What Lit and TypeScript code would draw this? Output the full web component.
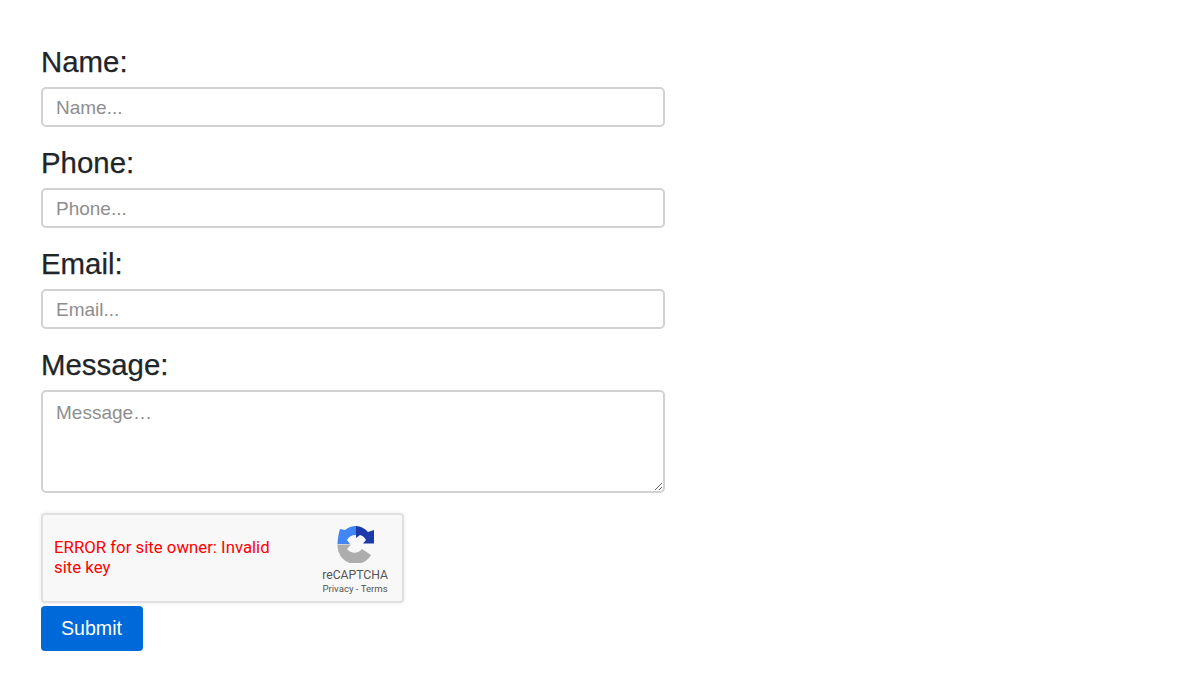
import { LitElement, html, css } from "lit";
import { customElement } from "lit/decorators.js";

@customElement("app-root")
export class AppRoot extends LitElement {
  static styles = css`
    :host { display: block; background: #fff; min-height: 692px; font-family: "Liberation Sans", Arial, sans-serif; color: #212529; }
    form { display: flex; flex-direction: column; width: 624px; padding: 45px 0 0 41px; box-sizing: content-box; }
    label { display: block; font-size: 29.4px; line-height: 34px; margin-bottom: 7.5px; -webkit-text-stroke: 0.25px #212529; }
    .field { display: block; width: 100%; box-sizing: border-box; height: 40.5px; margin: 0 0 19px; padding: 2px 13px 0; border: 2px solid #d2d2d2; border-radius: 5px; outline: none; background: #fff; font-family: inherit; font-size: 19px; color: #495057; }
    .field::placeholder { color: #8e8e8e; opacity: 1; }
    textarea.field { height: 103.5px; padding: 8.5px 13px; margin-bottom: 19.5px; line-height: 26px; resize: vertical; }
    .captcha { display: flex; align-items: center; justify-content: space-between; box-sizing: border-box; width: 363px; height: 90.5px; padding: 0 14px 0 11px; background: #f8f8f8; border: 2px solid #e0e0e0; border-radius: 4px; box-shadow: 0 0 3px 1px rgba(0,0,0,.06); margin-bottom: 3px; }
    .err { width: 225px; font-family: Roboto, sans-serif; font-size: 16.8px; line-height: 19.5px; color: #ff0000; }
    .brand { display: flex; flex-direction: column; align-items: center; padding-top: 6px; }
    .brand svg { display: block; margin-bottom: 5px; }
    .rc { font-family: Roboto, sans-serif; font-size: 12.2px; line-height: 14px; color: #555; }
    .links { font-family: Roboto, sans-serif; font-size: 9.6px; line-height: 14px; color: #555; white-space: nowrap; }
    button { align-self: flex-start; width: 102px; height: 45px; padding: 0 1px 0 0; border: 0; border-radius: 4px; background: #0069d9; color: #fff; font-family: inherit; font-size: 19.6px; }
  `;

  render() {
    return html`
      <form>
        <label>Name:</label>
        <input class="field" placeholder="Name..." />
        <label>Phone:</label>
        <input class="field" placeholder="Phone..." />
        <label>Email:</label>
        <input class="field" placeholder="Email..." />
        <label>Message:</label>
        <textarea class="field" placeholder="Message…"></textarea>
        <div class="captcha">
          <div class="err">ERROR for site owner: Invalid site key</div>
          <div class="brand">
            <svg width="37" height="37" viewBox="0 0 37 37">
              <path fill="#adadad" d="M0.5 18.5 A18 18 0 0 0 34 29 L25 23 A9.5 9.5 0 0 1 10 23 L14 18.5 Z"/>
              <path fill="#4285f4" d="M19 0 A18.5 18.5 0 0 0 8 4 L3 3 Q1 9 0.5 18 L13 18 L10 14 A10 10 0 0 1 19 9 Z"/>
              <path fill="#1c3aa9" d="M19 0 A18.5 18.5 0 0 1 31 6 L37 4 L37 17.5 L26 17.5 L29 14 Q27 10 23 9 L19 12 Z"/>
            </svg>
            <div class="rc">reCAPTCHA</div>
            <div class="links">Privacy - Terms</div>
          </div>
        </div>
        <button type="button">Submit</button>
      </form>
    `;
  }
}
